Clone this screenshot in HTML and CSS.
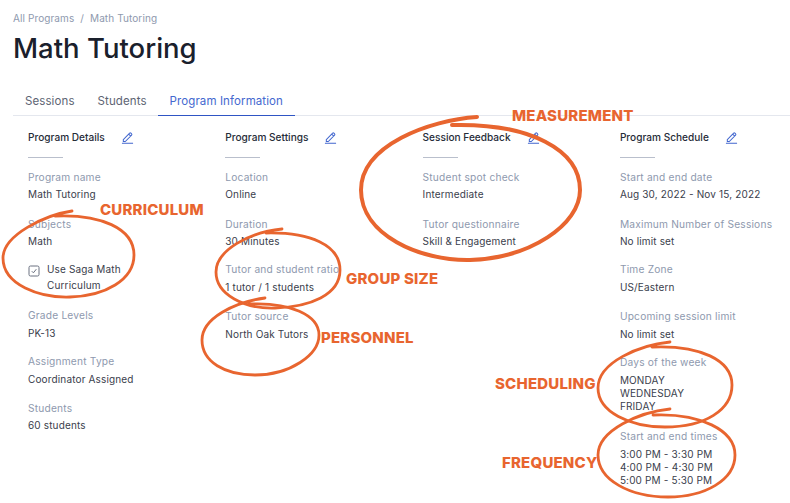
FILE: index.html
```html
<!DOCTYPE html>
<html lang="en">
<head>
<meta charset="utf-8">
<title>Math Tutoring</title>
<link rel="stylesheet" href="styles.css">
</head>
<body>
<main class="page">
  <nav class="crumbs"><span>All Programs</span><span class="sep">/</span><span>Math Tutoring</span></nav>
  <h1 class="title">Math Tutoring</h1>
  <div class="tabs">
    <span class="tab">Sessions</span>
    <span class="tab">Students</span>
    <span class="tab active">Program Information</span>
  </div>
  <div class="cols">
    <section class="col">
      <header class="col-head"><h2>Program Details</h2><svg class="pen" viewBox="0 0 14 14"><path d="M2.5 9.2 9.3 2.4a1 1 0 0 1 1.4 0l.7.7a1 1 0 0 1 0 1.4L4.6 11.3H2.5z M8.3 3.4l2.2 2.2"/><path class="pen-line" d="M1 13.2h12"/></svg></header>
      <div class="rule"></div>
      <div class="field"><div class="label">Program name</div><div class="value">Math Tutoring</div></div>
      <div class="field"><div class="label">Subjects</div><div class="value">Math</div></div>
      <div class="check"><svg class="box" viewBox="0 0 12 12"><rect x="1" y="1" width="10" height="10" rx="1.5"/><path d="M3.8 6.2 5.4 7.8 8.3 4.2"/></svg><span>Use Saga Math<br>Curriculum</span></div>
      <div class="field tall snug"><div class="label">Grade Levels</div><div class="value">PK-13</div></div>
      <div class="field tall roomy"><div class="label">Assignment Type</div><div class="value">Coordinator Assigned</div></div>
      <div class="field"><div class="label">Students</div><div class="value">60 students</div></div>
    </section>
    <section class="col">
      <header class="col-head"><h2>Program Settings</h2><svg class="pen" viewBox="0 0 14 14"><path d="M2.5 9.2 9.3 2.4a1 1 0 0 1 1.4 0l.7.7a1 1 0 0 1 0 1.4L4.6 11.3H2.5z M8.3 3.4l2.2 2.2"/><path class="pen-line" d="M1 13.2h12"/></svg></header>
      <div class="rule"></div>
      <div class="field"><div class="label">Location</div><div class="value">Online</div></div>
      <div class="field short"><div class="label">Duration</div><div class="value">30 Minutes</div></div>
      <div class="field tall"><div class="label">Tutor and student ratio</div><div class="value">1 tutor / 1 students</div></div>
      <div class="field tall"><div class="label">Tutor source</div><div class="value">North Oak Tutors</div></div>
    </section>
    <section class="col">
      <header class="col-head"><h2>Session Feedback</h2><svg class="pen" viewBox="0 0 14 14"><path d="M2.5 9.2 9.3 2.4a1 1 0 0 1 1.4 0l.7.7a1 1 0 0 1 0 1.4L4.6 11.3H2.5z M8.3 3.4l2.2 2.2"/><path class="pen-line" d="M1 13.2h12"/></svg></header>
      <div class="rule"></div>
      <div class="field"><div class="label">Student spot check</div><div class="value">Intermediate</div></div>
      <div class="field"><div class="label">Tutor questionnaire</div><div class="value">Skill &amp; Engagement</div></div>
    </section>
    <section class="col">
      <header class="col-head"><h2>Program Schedule</h2><svg class="pen" viewBox="0 0 14 14"><path d="M2.5 9.2 9.3 2.4a1 1 0 0 1 1.4 0l.7.7a1 1 0 0 1 0 1.4L4.6 11.3H2.5z M8.3 3.4l2.2 2.2"/><path class="pen-line" d="M1 13.2h12"/></svg></header>
      <div class="rule"></div>
      <div class="field"><div class="label">Start and end date</div><div class="value">Aug 30, 2022 - Nov 15, 2022</div></div>
      <div class="field short"><div class="label">Maximum Number of Sessions</div><div class="value">No limit set</div></div>
      <div class="field tall"><div class="label">Time Zone</div><div class="value">US/Eastern</div></div>
      <div class="field tall"><div class="label">Upcoming session limit</div><div class="value">No limit set</div></div>
      <div class="field gap"><div class="label">Days of the week</div><div class="value lines">MONDAY<br>WEDNESDAY<br>FRIDAY</div></div>
      <div class="field"><div class="label">Start and end times</div><div class="value lines">3:00 PM - 3:30 PM<br>4:00 PM - 4:30 PM<br>5:00 PM - 5:30 PM</div></div>
    </section>
  </div>
</main>
<svg class="marks" viewBox="0 0 790 503">
  <path d="M72 211C45 215 3 235 3 258C3 285 40 298 70 297C105 296 134 280 134 255C134 228 100 214 55 216"/>
  <path d="M282 229C250 232 216 250 216 272C216 295 245 309 275 308C310 307 340 295 340 270C340 245 310 232 266 233"/>
  <path d="M265 298C235 302 202 318 202 340C202 362 225 375 255 375C290 375 319 355 319 335C319 315 290 302 249 304"/>
  <path class="thick" d="M477 117C430 120 361 145 361 190C361 235 420 261 470 260C530 258 580 225 580 190C580 150 530 123 452 125"/>
  <path d="M670 342C640 345 598 362 598 388C598 412 630 427 665 427C705 427 732 410 732 385C732 360 700 345 652 347"/>
  <path d="M670 409C640 412 598 430 598 455C598 480 630 497 668 497C705 497 735 480 735 455C735 430 700 413 653 415"/>
</svg>
<span class="tag tag-curriculum">CURRICULUM</span>
<span class="tag tag-measurement">MEASUREMENT</span>
<span class="tag tag-group">GROUP SIZE</span>
<span class="tag tag-personnel">PERSONNEL</span>
<span class="tag tag-scheduling">SCHEDULING</span>
<span class="tag tag-frequency">FREQUENCY</span>
</body>
</html>
```
FILE: styles.css
```css
* { box-sizing: border-box; }
html, body { margin: 0; padding: 0; }
body {
  position: relative;
  width: 790px;
  height: 503px;
  overflow: hidden;
  background: #fff;
  font-family: Inter, "Liberation Sans", sans-serif;
  color: #2d3340;
}
.page { padding: 12px 0 0 13px; }
.crumbs {
  display: flex;
  gap: 6px;
  height: 13px;
  font-size: 10px;
  line-height: 13px;
  letter-spacing: .1px;
  color: #8e99ae;
}
.title {
  margin: 4px 0 0;
  font-size: 27.5px;
  line-height: 38px;
  font-weight: 500;
  color: #1a202c;
}
.tabs {
  display: flex;
  margin-top: 18px;
  height: 31px;
  padding-left: .5px;
  border-bottom: 1px solid #e4e7ee;
}
.tab {
  padding: 6.5px 11.5px 0;
  font-size: 11.5px;
  line-height: 18px;
  letter-spacing: .1px;
  color: #5d6473;
}
.active {
  color: #4468cf;
  border-bottom: 1px solid #2f55c4;
  height: 31px;
}
.cols {
  display: grid;
  grid-template-columns: repeat(4, 197.3px);
  padding: 13px 0 0 15px;
}
.col-head {
  display: flex;
  align-items: center;
  gap: 16px;
  height: 16px;
}
.col-head h2 {
  margin: 0;
  font-size: 10.1px;
  line-height: 16px;
  font-weight: 500;
  color: #262c38;
  white-space: nowrap;
}
.pen {
  width: 13px;
  height: 13px;
  fill: none;
  stroke: #4468cf;
  stroke-width: 1.1;
}
.rule {
  width: 35px;
  height: 1px;
  margin: 11.5px 0 11.5px;
  background: #b9bfcc;
}
.field { margin-bottom: 14px; }
.label {
  font-size: 10.2px;
  line-height: 16px;
  letter-spacing: .2px;
  color: #8e99ae;
  white-space: nowrap;
}
.value {
  margin-top: 1px;
  font-size: 10px;
  line-height: 16px;
  letter-spacing: .15px;
  color: #3a404c;
  white-space: nowrap;
}
.lines { line-height: 13px; margin-top: 4px; }
.short { margin-bottom: 12px; }
.tall .value { margin-top: 2px; }
.tall { margin-bottom: 12.5px; }
.snug { margin-bottom: 11.5px; }
.roomy { margin-bottom: 13.5px; }
.gap { margin-bottom: 14.5px; }
.check {
  display: flex;
  gap: 7px;
  margin: -2px 0 14px;
  font-size: 10px;
  line-height: 16px;
  letter-spacing: .15px;
  color: #3a404c;
}
.box {
  width: 12px;
  height: 12px;
  margin-top: 4px;
  fill: none;
  stroke: #6a7080;
  stroke-width: 1;
}
.marks {
  position: absolute;
  left: 0;
  top: 0;
  width: 790px;
  height: 503px;
  fill: none;
  stroke: #e8652f;
  stroke-width: 2.8;
  stroke-linecap: round;
  pointer-events: none;
}
.marks .thick { stroke-width: 4; }
.tag {
  position: absolute;
  font-size: 15px;
  line-height: 18px;
  font-weight: 800;
  letter-spacing: .2px;
  color: #e8652f;
  white-space: nowrap;
}
.tag-curriculum { left: 100px; top: 200.5px; }
.tag-measurement { left: 512px; top: 106.5px; }
.tag-group { left: 346px; top: 269.5px; }
.tag-personnel { left: 321px; top: 329px; }
.tag-scheduling { left: 495px; top: 375px; }
.tag-frequency { left: 502px; top: 453.5px; }
```
